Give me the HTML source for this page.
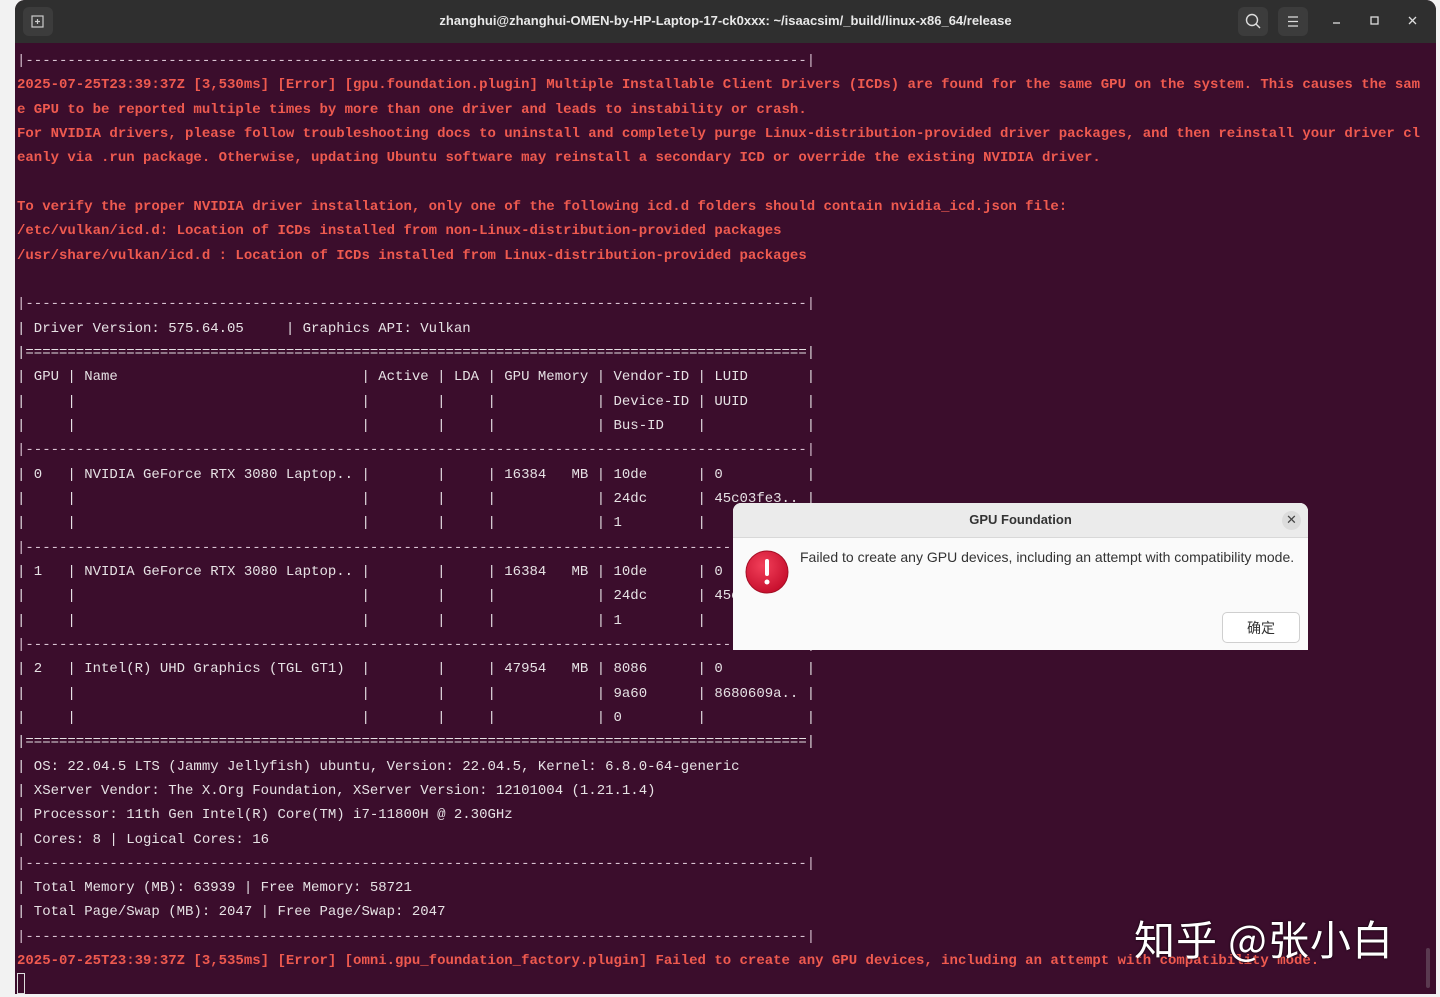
<!DOCTYPE html>
<html><head><meta charset="utf-8"><style>
html,body{margin:0;padding:0;width:1440px;height:997px;overflow:hidden;background:#f2f2f2;}
.win{position:absolute;left:15px;top:0;width:1421px;height:994px;background:#3b0d2c;border-radius:10px 10px 0 0;overflow:hidden;}
.tb{position:absolute;left:0;top:0;width:100%;height:43px;background:#2f2f2f;}
.tt{position:absolute;left:0;right:0;top:13px;text-align:center;color:#e8e8e8;font:bold 13px "Liberation Sans",sans-serif;}
.btn{position:absolute;top:7px;width:30px;height:29px;background:#3c3c3c;border-radius:6px;}
pre{position:absolute;left:2px;top:49px;margin:0;font:14px/24.33px "Liberation Mono",monospace;color:#e6e1e4;white-space:pre;}
.r{color:#ef5a4f;font-weight:bold;}
.d{color:#d9c3d2;}
.cur{display:inline-block;width:8px;height:21px;border:1.5px solid #ddd;box-sizing:border-box;vertical-align:-5px;}
.dlg{position:absolute;left:733px;top:503px;width:575px;height:147px;background:#fafafa;border-radius:8px 8px 0 0;overflow:hidden;font-family:"Liberation Sans","Noto Sans CJK SC",sans-serif;}
.dh{height:34px;background:#ebebeb;border-bottom:1px solid #d8d8d8;text-align:center;font-weight:bold;font-size:13px;line-height:34px;color:#333;}
.wm{position:absolute;left:1134px;top:907px;color:#fff;font:41px "Noto Sans CJK SC",sans-serif;letter-spacing:1px;text-shadow:0 0 2px #000;}
</style></head><body>
<div class="win">
<div class="tb">
<div class="btn" style="left:8px;"><svg width="30" height="29"><rect x="9" y="9" width="11" height="11" fill="none" stroke="#ccc" stroke-width="1.2"/><path d="M14.5 12v5M12 14.5h5" stroke="#ccc" stroke-width="1.2"/></svg></div>
<div class="tt">zhanghui@zhanghui-OMEN-by-HP-Laptop-17-ck0xxx: ~/isaacsim/_build/linux-x86_64/release</div>
<div class="btn" style="left:1223px;"><svg width="30" height="29"><circle cx="14" cy="13" r="5.5" fill="none" stroke="#ddd" stroke-width="1.4"/><path d="M18 17l4 4" stroke="#ddd" stroke-width="1.4"/></svg></div>
<div class="btn" style="left:1263px;"><svg width="30" height="29"><path d="M10 10h10M10 14.5h10M10 19h10" stroke="#ddd" stroke-width="1.3"/></svg></div>
<svg style="position:absolute;left:1310px;top:12px" width="110" height="20"><path d="M8 11h7" stroke="#ddd" stroke-width="1.3"/><rect x="46" y="5" width="7" height="7" fill="none" stroke="#ddd" stroke-width="1.3"/><path d="M84 5l7 7M91 5l-7 7" stroke="#ddd" stroke-width="1.3"/></svg>
</div>
<pre><span class="d">|---------------------------------------------------------------------------------------------|</span>
<span class="r">2025-07-25T23:39:37Z [3,530ms] [Error] [gpu.foundation.plugin] Multiple Installable Client Drivers (ICDs) are found for the same GPU on the system. This causes the sam
e GPU to be reported multiple times by more than one driver and leads to instability or crash.
For NVIDIA drivers, please follow troubleshooting docs to uninstall and completely purge Linux-distribution-provided driver packages, and then reinstall your driver cl
eanly via .run package. Otherwise, updating Ubuntu software may reinstall a secondary ICD or override the existing NVIDIA driver.

To verify the proper NVIDIA driver installation, only one of the following icd.d folders should contain nvidia_icd.json file:
/etc/vulkan/icd.d: Location of ICDs installed from non-Linux-distribution-provided packages
/usr/share/vulkan/icd.d : Location of ICDs installed from Linux-distribution-provided packages</span>

<span class="d">|---------------------------------------------------------------------------------------------|</span>
| Driver Version: 575.64.05     | Graphics API: Vulkan
|=============================================================================================|
| GPU | Name                             | Active | LDA | GPU Memory | Vendor-ID | LUID       |
|     |                                  |        |     |            | Device-ID | UUID       |
|     |                                  |        |     |            | Bus-ID    |            |
<span class="d">|---------------------------------------------------------------------------------------------|</span>
| 0   | NVIDIA GeForce RTX 3080 Laptop.. |        |     | 16384   MB | 10de      | 0          |
|     |                                  |        |     |            | 24dc      | 45c03fe3.. |
|     |                                  |        |     |            | 1         |            |
<span class="d">|---------------------------------------------------------------------------------------------|</span>
| 1   | NVIDIA GeForce RTX 3080 Laptop.. |        |     | 16384   MB | 10de      | 0          |
|     |                                  |        |     |            | 24dc      | 45c03fe3.. |
|     |                                  |        |     |            | 1         |            |
<span class="d">|---------------------------------------------------------------------------------------------|</span>
| 2   | Intel(R) UHD Graphics (TGL GT1)  |        |     | 47954   MB | 8086      | 0          |
|     |                                  |        |     |            | 9a60      | 8680609a.. |
|     |                                  |        |     |            | 0         |            |
|=============================================================================================|
| OS: 22.04.5 LTS (Jammy Jellyfish) ubuntu, Version: 22.04.5, Kernel: 6.8.0-64-generic
| XServer Vendor: The X.Org Foundation, XServer Version: 12101004 (1.21.1.4)
| Processor: 11th Gen Intel(R) Core(TM) i7-11800H @ 2.30GHz
| Cores: 8 | Logical Cores: 16
<span class="d">|---------------------------------------------------------------------------------------------|</span>
| Total Memory (MB): 63939 | Free Memory: 58721
| Total Page/Swap (MB): 2047 | Free Page/Swap: 2047
<span class="d">|---------------------------------------------------------------------------------------------|</span>
<span class="r">2025-07-25T23:39:37Z [3,535ms] [Error] [omni.gpu_foundation_factory.plugin] Failed to create any GPU devices, including an attempt with compatibility mode.</span>
<span class="cur"></span></pre>
<div style="position:absolute;left:1411px;top:948px;width:4px;height:40px;background:#5a3a50;border-radius:2px;"></div>
</div>
<div class="wm">知乎 @张小白</div>
<div class="dlg">
<div class="dh">GPU Foundation</div>
<div style="position:absolute;left:549px;top:8px;width:19px;height:19px;border-radius:50%;background:#dcdcdc;text-align:center;line-height:18px;font-size:13px;color:#444;">✕</div>
<svg style="position:absolute;left:12px;top:47px" width="44" height="44"><defs><radialGradient id="g" cx="40%" cy="35%" r="65%"><stop offset="0" stop-color="#f2405a"/><stop offset="1" stop-color="#c8102e"/></radialGradient></defs><circle cx="22" cy="22" r="21" fill="url(#g)" stroke="#a50e25" stroke-width="1"/><rect x="20" y="9" width="4" height="17" rx="2" fill="#fff"/><circle cx="22" cy="32" r="2.5" fill="#fff"/></svg>
<div style="position:absolute;left:67px;top:46px;font-size:14px;color:#333;">Failed to create any GPU devices, including an attempt with compatibility mode.</div>
<div style="position:absolute;left:489px;top:109px;width:78px;height:31px;border:1px solid #cfcfcf;border-radius:5px;background:#fff;text-align:center;line-height:31px;font-size:14px;color:#333;box-sizing:border-box;">确定</div>
</div>
</body></html>
